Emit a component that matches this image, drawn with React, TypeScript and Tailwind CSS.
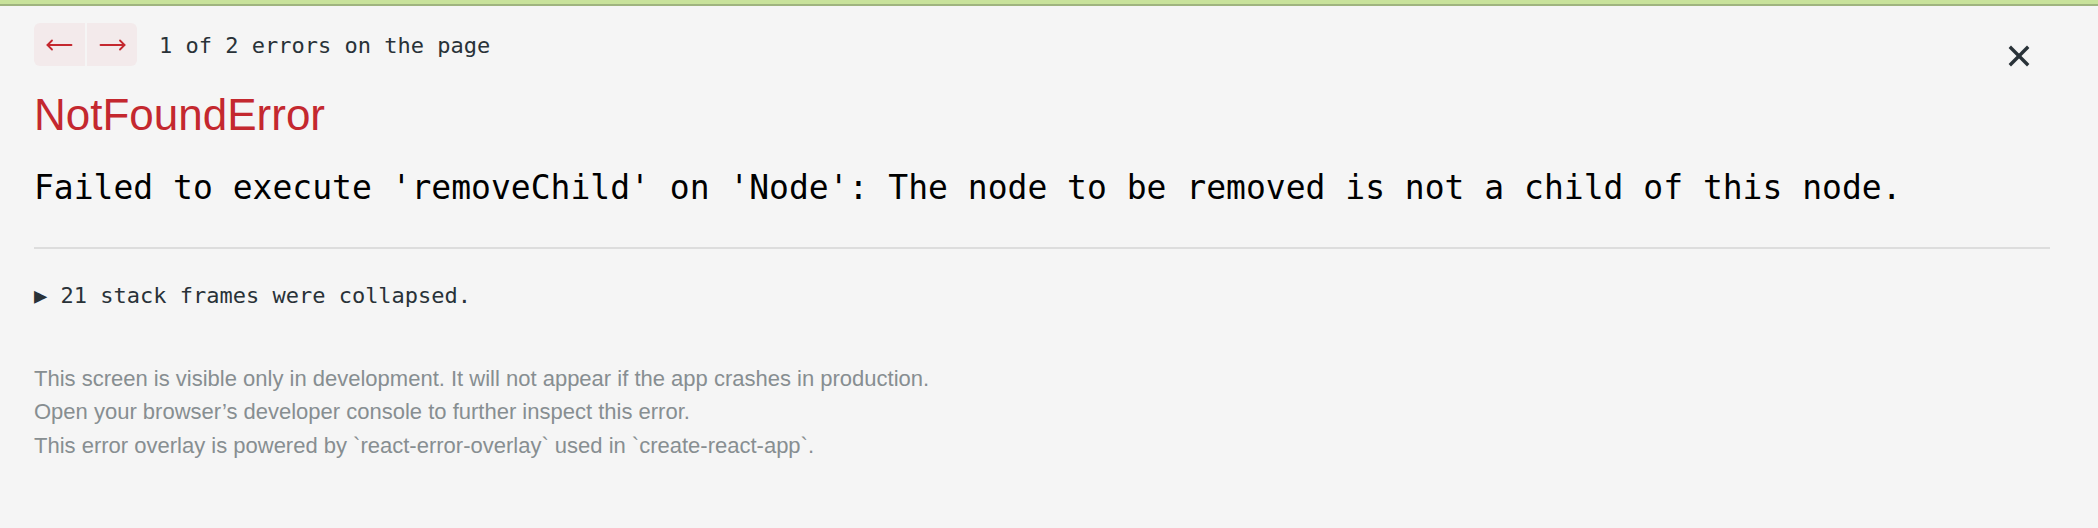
import React from "react";

const mono = { fontFamily: '"DejaVu Sans Mono", "Liberation Mono", monospace' };

export default function App() {
  return (
    <div className="min-h-screen w-full bg-[#f5f5f5] flex flex-col">
      <div className="h-[4px] w-full bg-[#c8e29b]" />
      <div className="h-[2px] w-full bg-[#9fb47f]" />
      <div className="flex flex-col pl-[34px] pr-[48px] pt-[16px]">
        <div className="flex justify-between">
          <div className="flex items-center">
            <button className="w-[51px] h-[43px] bg-[#f3eaeb] rounded-l-[6px] flex items-center justify-center mr-[2px]">
              <svg width="27" height="12" viewBox="0 0 27 12" fill="none" stroke="#c4282f" strokeWidth="1.8" strokeLinecap="round" strokeLinejoin="round">
                <path d="M1.5 6 H25.5" />
                <path d="M6 1.5 L1.5 6 L6 10.5" />
              </svg>
            </button>
            <button className="w-[50px] h-[43px] bg-[#f3eaeb] rounded-r-[6px] flex items-center justify-center">
              <svg width="27" height="12" viewBox="0 0 27 12" fill="none" stroke="#c4282f" strokeWidth="1.8" strokeLinecap="round" strokeLinejoin="round">
                <path d="M1.5 6 H25.5" />
                <path d="M21 1.5 L25.5 6 L21 10.5" />
              </svg>
            </button>
            <span className="ml-[22px] text-[22px] leading-[22px] text-[#293238] mt-[2px]" style={mono}>
              1 of 2 errors on the page
            </span>
          </div>
          <button className="self-start mt-[23px] mr-[20px] w-[22px] h-[22px] flex items-center justify-center">
            <svg width="22" height="22" viewBox="0 0 22 22" fill="none" stroke="#293238" strokeWidth="3.4" strokeLinecap="square">
              <path d="M3 3 L19 19" />
              <path d="M19 3 L3 19" />
            </svg>
          </button>
        </div>
        <h1
          className="mt-[26px] text-[44px] leading-[44px] text-[#c4282f] font-normal"
          style={{ fontFamily: '"Liberation Sans", Arial, sans-serif' }}
        >
          NotFoundError
        </h1>
        <div className="mt-[34px] text-[33px] leading-[33px] text-black whitespace-pre" style={mono}>
          Failed to execute 'removeChild' on 'Node': The node to be removed is not a child of this node.
        </div>
        <div className="mt-[43px] h-[2px] w-full bg-[#dddddd]" />
        <div className="mt-[36px] text-[22px] leading-[22px] text-[#293238] whitespace-pre" style={mono}>
          ▶ 21 stack frames were collapsed.
        </div>
        <div
          className="mt-[55px] text-[22px] leading-[33.4px] text-[#878e91]"
          style={{ fontFamily: '"Liberation Sans", Arial, sans-serif' }}
        >
          <div>This screen is visible only in development. It will not appear if the app crashes in production.</div>
          <div>Open your browser’s developer console to further inspect this error.</div>
          <div>This error overlay is powered by `react-error-overlay` used in `create-react-app`.</div>
        </div>
      </div>
    </div>
  );
}
